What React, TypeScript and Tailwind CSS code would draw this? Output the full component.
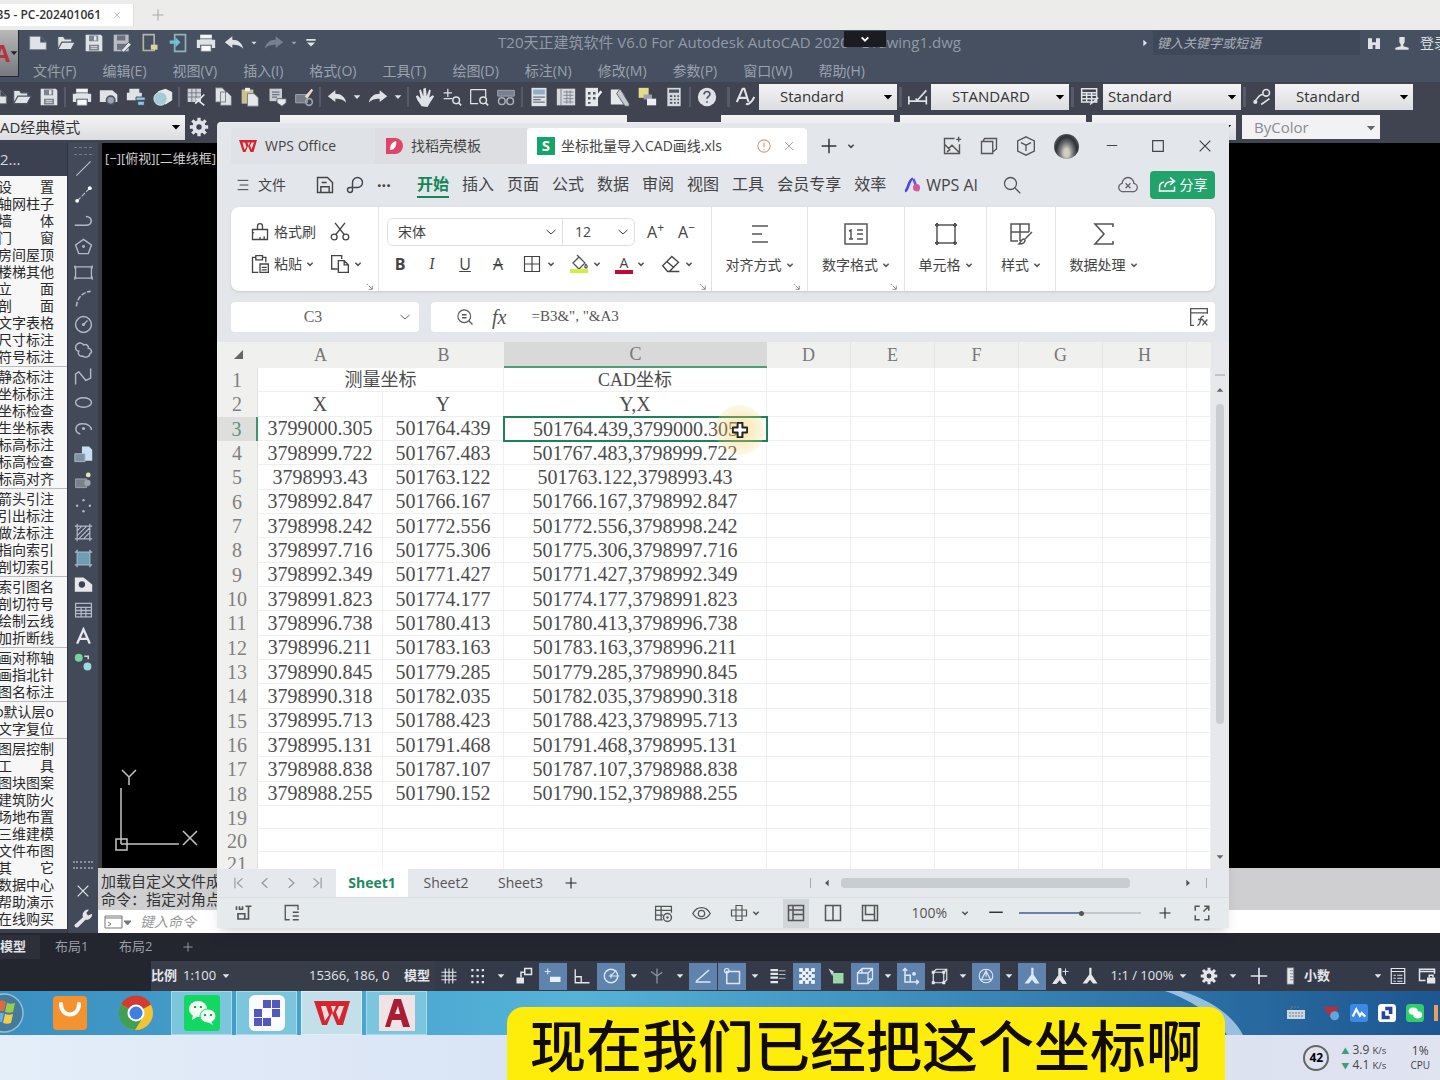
import type { ReactNode } from "react";

const shapes: Record<string, ReactNode> = {
  file: <path d="M2 4h13l7 7v9H2z M15 4v7h7" fill="currentColor" stroke="#6b7280" strokeWidth="1" />,
  folder: <path d="M2 20V4h7l2 3h8v4h4l-5 9z M2 20l5-9h12" fill="currentColor" stroke="#4b5563" strokeWidth="1.4" />,
  save: (
    <>
      <path d="M2 2h18l2 2v18H2z" fill="currentColor" />
      <path d="M6 3h11v7H6z M6 14h12v7H6z" fill="#7b8290" />
      <path d="M12 4h3v5h-3z M8 16h8v1H8z M8 18h8v1H8z" fill="#e5e7eb" />
    </>
  ),
  saveAs: (
    <>
      <path d="M2 2h18v20H2z" fill="#b9bcc2" />
      <path d="M6 3h10v6H6z M6 13h12v7H6z" fill="#6b7280" />
      <path d="M11 21l9-10 3 3-9 9z" fill="#e5e7eb" stroke="#4b5563" />
    </>
  ),
  phone: (
    <>
      <path d="M4 2h13v19H4z" fill="none" stroke="#b7b3a5" strokeWidth="2" />
      <path d="M13 14h8v6h-8z" fill="#ddd3a0" />
    </>
  ),
  phoneIn: (
    <>
      <path d="M8 2h13v20H8z" fill="none" stroke="#8fb4bf" strokeWidth="2" />
      <path d="M2 9h7V5l6 6-6 6v-4H2z" fill="#6ec1d3" />
    </>
  ),
  printer: (
    <>
      <path d="M5 2h14v7H5z" fill="#f3f4f6" />
      <path d="M1 8h22v10h-4v-4H5v4H1z" fill="currentColor" />
      <path d="M6 15h12v7H6z" fill="#f8fafc" stroke="#7b8290" />
      <path d="M5 7h14" stroke="#4b5563" />
    </>
  ),
  undo: <path d="M1 11l9-7v4c7 0 12 4 13 11-3-4-7-5-13-5v4z" fill="currentColor" />,
  redo: <path d="M23 11l-9-7v4C7 8 2 12 1 19c3-4 7-5 13-5v4z" fill="currentColor" />,
  more: <path d="M4 5h16v3H4z M5 11h14l-7 7z" fill="currentColor" />,
  preview: (
    <>
      <path d="M1 4h15l6 5v9H1z" fill="currentColor" />
      <circle cx="14" cy="16" r="5" fill="#9ca3af" stroke="#4b5563" strokeWidth="2" />
    </>
  ),
  publish: (
    <>
      <path d="M4 2h12v5H4z M1 7h18v9H1z" fill="currentColor" />
      <path d="M12 12h11v4H12z M14 17h8v5h-8z" fill="#8ec5e2" stroke="#3b4150" />
    </>
  ),
  globe: (
    <>
      <path d="M6 5l9-3 8 4v10l-8 5-4-3z" fill="#e5e7eb" />
      <circle cx="9" cy="14" r="8" fill="#a5ccd4" stroke="#dbe7ea" />
    </>
  ),
  cut: (
    <>
      <path d="M2 2h16v16H2z" fill="#cfd2d8" />
      <path d="M2 7h16 M2 12h16 M7 2v16 M12 2v16" stroke="#6b7280" />
      <path d="M22 9L11 20 M12 14l10 8" stroke="#e5e7eb" strokeWidth="2" />
    </>
  ),
  copy: <path d="M3 1h8l4 4v13H3z M9 6h8l5 5v11H9z" fill="currentColor" stroke="#6b7280" />,
  paste: (
    <>
      <path d="M2 3h14v17H2z" fill="#c9c28e" />
      <path d="M6 1h6v4H6z" fill="#efefef" />
      <path d="M9 8h8l5 5v10H9z" fill="#e5e7eb" stroke="#6b7280" />
    </>
  ),
  match: (
    <>
      <path d="M3 2h15v15H3z" fill="#c7cbd2" />
      <path d="M6 6h9 M6 9h9 M6 12h6" stroke="#6b7280" strokeWidth="1.5" />
      <path d="M12 14h11v5l-5 4-6-4z" fill="#e5e7eb" stroke="#4b5563" />
    </>
  ),
  brushBlock: (
    <>
      <path d="M2 9h14v10H2z" fill="#777e8a" stroke="#aab0ba" />
      <path d="M13 11l8-9 2 2-7 10z" fill="#ead9cc" />
      <circle cx="18" cy="18" r="4" fill="none" stroke="#9ca3af" strokeWidth="2" />
    </>
  ),
  hand: <path d="M8 23L3 16l-2-5 2-1 4 4L5 4l2-1 3 8V2l3-1 1 10 3-8 2 1-2 9 4-3 2 1-5 8-3 5z" fill="currentColor" />,
  zoomRt: (
    <>
      <path d="M7 2v10 M2 7h10 M2 14h10" stroke="currentColor" strokeWidth="1.5" />
      <circle cx="17" cy="16" r="4" fill="none" stroke="currentColor" strokeWidth="1.8" />
      <path d="M20 19l3 3" stroke="currentColor" strokeWidth="2" />
    </>
  ),
  zoomWin: (
    <>
      <path d="M2 3h18v9 M2 3v17h9" fill="none" stroke="currentColor" strokeWidth="1.5" />
      <circle cx="17" cy="16" r="4" fill="none" stroke="currentColor" strokeWidth="1.8" />
      <path d="M20 19l3 3" stroke="currentColor" strokeWidth="2" />
    </>
  ),
  zoomPrev: (
    <>
      <path d="M2 4h20v7H2z" fill="#79818f" stroke="#a7adb8" />
      <circle cx="7" cy="17" r="4" fill="none" stroke="#aab0ba" strokeWidth="1.8" />
      <circle cx="17" cy="17" r="4" fill="none" stroke="#aab0ba" strokeWidth="1.8" />
    </>
  ),
  props: (
    <>
      <path d="M3 1h18v22H3z" fill="#dfe3e8" />
      <path d="M5 3h14v6H5z" fill="#8fb0c4" />
      <path d="M5 12h14 M5 15h9 M5 18h14" stroke="#6b7280" strokeWidth="1.5" />
    </>
  ),
  design: (
    <>
      <path d="M1 2h22v20H1z" fill="#d5d8dd" />
      <path d="M6 2v20 M9 6h12 M9 10h12 M9 14h12 M9 18h12 M13 4v16 M17 4v16" stroke="#777e8a" />
    </>
  ),
  tool: (
    <>
      <path d="M3 1h15v22H3z" fill="#e5e7eb" />
      <path d="M6 6h3v3H6z M12 6h3v3h-3z M6 12h3v3H6z M12 12h3v3h-3z M6 18h3v2H6z" fill="#4b5563" />
      <path d="M16 13l6-8" stroke="#f1f1f1" strokeWidth="3" />
    </>
  ),
  sheetset: (
    <>
      <path d="M1 3h11l5 6v12H1z" fill="#e5e7eb" />
      <path d="M12 2l11 18v3h-5L8 8z" fill="#c7cbd2" stroke="#4b5563" />
    </>
  ),
  markup: (
    <>
      <path d="M2 1h12v12H2z" fill="#e3dc8c" />
      <path d="M8 9h10v6H8z" fill="#9aa2ae" />
      <path d="M12 14h11v8H12z" fill="#eceef1" />
    </>
  ),
  calc: (
    <>
      <path d="M4 1h16v22H4z" fill="#d5d8dd" />
      <path d="M6 3h12v4H6z M7 10h3v2H7z M12 10h2v2h-2z M16 10h2v2h-2z M7 14h3v2H7z M12 14h2v2h-2z M16 14h2v2h-2z M7 18h3v2H7z M12 18h2v2h-2z M16 18h2v2h-2z" fill="#4b5563" />
    </>
  ),
  help: (
    <>
      <circle cx="12" cy="12" r="11" fill="#dfe2e7" />
      <path d="M8.500 9c0-5 7.500-4.500 7 0-.2 2-3.500 2.500-3.500 5 M12 17v2" fill="none" stroke="#4b5563" strokeWidth="2" />
    </>
  ),
  textStyle: <path d="M1 18L8 2h2l5 16 M4 13h9 M12 20c3 2 7-2 10-8" fill="none" stroke="currentColor" strokeWidth="2.5" />,
  dimStyle: <path d="M1 11v10 M22 11v10 M1 17h21 M9 14l4 3 M12 15L22 4" fill="none" stroke="currentColor" strokeWidth="2" />,
  tableStyle: <path d="M2 2h18v16H2z M2 7h18 M2 10h18 M2 14h18 M8 7v11 M14 7v11 M12 21l10-8" fill="none" stroke="currentColor" strokeWidth="1.8" />,
  leader: (
    <>
      <circle cx="17" cy="7" r="4" fill="none" stroke="currentColor" strokeWidth="2" />
      <path d="M13 9c-6 0-6 6-10 8 M11 21l10-7" fill="none" stroke="currentColor" strokeWidth="2" />
      <circle cx="4" cy="18" r="2.500" fill="currentColor" />
    </>
  ),
  gear: (
    <>
      <path d="M12 1v22 M1 12h22 M4 4l16 16 M20 4L4 20" stroke="currentColor" strokeWidth="4" />
      <circle cx="12" cy="12" r="5.500" fill="none" stroke="currentColor" strokeWidth="5" />
      <circle cx="12" cy="12" r="3.200" fill="#3b4150" />
    </>
  ),
  binoculars: <path d="M3 5h6v6h6V5h6v16h-7v-6h-4v6H3z" fill="currentColor" />,
  user: <path d="M8 3h8v8l-2 3v3l8 2v3H2v-3l8-2v-3l-2-3z" fill="currentColor" />,
  line: <path d="M3 21L21 3" stroke="currentColor" strokeWidth="1.500" />,
  cline: (
    <>
      <path d="M4 20L20 4" stroke="currentColor" strokeWidth="1.500" strokeDasharray="6 2" />
      <circle cx="4" cy="20" r="2.400" fill="#fff" />
      <circle cx="20" cy="4" r="2.400" fill="#fff" />
    </>
  ),
  pline: <path d="M1 18h14c9 0 9-11 0-11" fill="none" stroke="currentColor" strokeWidth="2" />,
  polygon: (
    <>
      <path d="M12 3l10 7-4 11H6L2 10z" fill="none" stroke="currentColor" strokeWidth="1.800" />
      <circle cx="12" cy="12" r="1.800" fill="currentColor" />
    </>
  ),
  rect: <path d="M2 5h20v14H2z M1 3v4 M23 3v4 M1 17v4 M23 17v4" fill="none" stroke="currentColor" strokeWidth="1.600" />,
  arc: <path d="M3 22C4 11 11 4 21 3" fill="none" stroke="currentColor" strokeWidth="2" strokeDasharray="6 2" />,
  circle: (
    <>
      <circle cx="12" cy="12" r="10" fill="none" stroke="currentColor" strokeWidth="1.800" />
      <circle cx="12" cy="12" r="2" fill="currentColor" />
      <path d="M12 12l5-5" stroke="currentColor" strokeWidth="1.500" />
    </>
  ),
  cloud: <path d="M4 4c3-3 7-1 8 1 4-2 7 2 6 4 5 1 5 6 2 7 0 4-6 6-9 3-4 1-7-3-5-6C1 12 1 6 4 4z" fill="none" stroke="currentColor" strokeWidth="1.800" />,
  spline: <path d="M2 22V9l4-3 9 11 6-3V2" fill="none" stroke="currentColor" strokeWidth="1.800" strokeLinejoin="round" />,
  ellipse: <ellipse cx="12" cy="12" rx="10" ry="6" fill="none" stroke="currentColor" strokeWidth="1.800" />,
  ellArc: (
    <>
      <path d="M8 19C-1 17 1 5 12 6c6 0 10 4 10 8" fill="none" stroke="currentColor" strokeWidth="1.800" />
      <circle cx="12" cy="12" r="2" fill="currentColor" />
    </>
  ),
  block: (
    <>
      <path d="M10 2h9l4 4v14H10z" fill="#c7dff0" />
      <path d="M1 11h13v10H1z" fill="#7f92a5" stroke="#b7c5d3" />
    </>
  ),
  makeBlock: (
    <>
      <path d="M2 10h14v11H2z" fill="#7a818d" stroke="#a9b0bb" />
      <circle cx="17" cy="15" r="4" fill="#9ca3af" />
      <circle cx="18" cy="5" r="3" fill="#e6e6b8" />
    </>
  ),
  points: (
    <>
      <circle cx="12" cy="4" r="1.500" fill="currentColor" />
      <circle cx="4" cy="11" r="1.500" fill="currentColor" />
      <circle cx="20" cy="11" r="1.500" fill="currentColor" />
      <circle cx="12" cy="18" r="1.500" fill="currentColor" />
    </>
  ),
  hatch: <path d="M4 4h16v16H4z M4 10l6-6 M4 16L16 4 M6 20L20 6 M12 20l8-8 M1 4h3V1 M23 4h-3V1 M1 20h3v3 M23 20h-3v3" fill="none" stroke="currentColor" strokeWidth="1.500" />,
  gradient: <path d="M4 4h16v16H4z M1 4h3V1 M23 4h-3V1 M1 20h3v3 M23 20h-3v3" fill="#6f9db3" stroke="#9db9c6" strokeWidth="1.500" />,
  region: (
    <>
      <path d="M1 3h11l11 9v9H1z" fill="#e5e7eb" />
      <circle cx="10" cy="12" r="4" fill="#3b4150" />
    </>
  ),
  table: <path d="M2 3h20v17H2z M2 8h20 M2 12h20 M2 16h20 M9 8v12 M15 8v12" fill="none" stroke="currentColor" strokeWidth="1.600" />,
  mtext: <path d="M4 21l8-18 8 18 M7 15h10" fill="none" stroke="#e5e7eb" strokeWidth="3" />,
  addSel: (
    <>
      <circle cx="6" cy="6" r="5" fill="#79d19b" />
      <circle cx="17" cy="17" r="5" fill="#9adbe4" />
      <path d="M13 4h5v4" fill="none" stroke="#d1d5db" strokeWidth="2" />
    </>
  ),
  wrench: <path d="M2 20l10-9c-2-5 3-10 7-9l-3 4 2 3 5-2c0 5-4 8-8 7l-9 9c-3 1-5-1-4-3z" fill="currentColor" />,
  gridOn: <path d="M7 2v20 M12 2v20 M17 2v20 M2 7h20 M2 12h20 M2 17h20" stroke="currentColor" strokeWidth="1.500" />,
  snap: <path d="M3 4h18 M3 12h18 M3 20h18" stroke="currentColor" strokeWidth="3" strokeDasharray="3 4" />,
  infer: (
    <>
      <path d="M2 14h10v8H2z" fill="currentColor" />
      <path d="M13 2h9v8h-9z M8 14V7h5" fill="none" stroke="currentColor" strokeWidth="2" />
    </>
  ),
  dynIn: (
    <>
      <path d="M5 2v8 M1 6h8" stroke="#d7e6f5" strokeWidth="1.500" />
      <path d="M8 13h14v7H8z" fill="#e8f1fa" />
    </>
  ),
  ortho: <path d="M3 3v18h19 M3 13h8v8" fill="none" stroke="currentColor" strokeWidth="1.800" />,
  polar: (
    <>
      <circle cx="12" cy="12" r="9" fill="none" stroke="currentColor" strokeWidth="1.800" />
      <path d="M12 12h11 M12 12l7-8 M12 9v6 M9 12h6" stroke="currentColor" strokeWidth="1.500" />
    </>
  ),
  iso: <path d="M12 2v20 M12 12L4 6 M12 12l7-5 M12 12v7" stroke="#8b929e" strokeWidth="1.800" />,
  otrack: <path d="M2 20h20 M3 19L20 4" stroke="currentColor" strokeWidth="2.200" />,
  osnap: (
    <>
      <path d="M5 6h17v16H5z" fill="none" stroke="currentColor" strokeWidth="2" />
      <circle cx="5" cy="5" r="3" fill="none" stroke="currentColor" strokeWidth="1.500" />
    </>
  ),
  lweight: (
    <>
      <path d="M2 4h10 M2 9h10 M2 14h10 M2 20h10" stroke="currentColor" strokeWidth="3" />
      <path d="M13 5h9 M13 10h9 M13 15h9" stroke="currentColor" />
    </>
  ),
  checker: <path d="M2 2h4v4H2z M10 2h4v4h-4z M18 2h4v4h-4z M6 6h4v4H6z M14 6h4v4h-4z M2 10h4v4H2z M10 10h4v4h-4z M18 10h4v4h-4z M6 14h4v4H6z M14 14h4v4h-4z M2 18h4v4H2z M10 18h4v4h-4z M18 18h4v4h-4z" fill="#eef5fc" stroke="#eef5fc" />,
  cycle: (
    <>
      <path d="M8 8h14v14H8z" fill="#9fd8a8" />
      <path d="M2 2l5 10 2-6z" fill="#d1d5db" />
    </>
  ),
  cube: <path d="M2 8h14v14H2z M8 2h14v14h-6 M8 2v6 M2 8l6-6 M16 8l6-6 M16 22l6-6" fill="none" stroke="currentColor" strokeWidth="1.700" />,
  ucs: (
    <>
      <path d="M4 2v18h18 M1 5l3-3 3 3 M19 17l3 3-3 3 M4 11h7v9" fill="none" stroke="currentColor" strokeWidth="2" />
      <circle cx="16" cy="9" r="2.500" fill="currentColor" />
    </>
  ),
  filter: (
    <>
      <path d="M3 7h14v14H3z M3 7l4-4h14v14l-4 4 M17 7l4-4" fill="none" stroke="currentColor" strokeWidth="1.600" />
      <path d="M1 5h4v4H1z M15 5h4v4h-4z M1 19h4v4H1z M15 19h4v4h-4z" fill="currentColor" />
    </>
  ),
  gizmo: (
    <>
      <circle cx="12" cy="12" r="9" fill="none" stroke="currentColor" strokeWidth="1.500" />
      <path d="M12 5l6 12H6z M12 5v8" fill="none" stroke="currentColor" strokeWidth="1.500" />
    </>
  ),
  anno: <path d="M11 1h3v9l8 12h-6l-4-5-4 5H2l9-12z" fill="currentColor" />,
  annoPlus: <path d="M9 2h3v9l7 11h-5l-4-5-4 5H1l8-11z M18 2v9 M14 6h8" fill="currentColor" stroke="currentColor" strokeWidth="1.200" />,
  plus: <path d="M12 1v22 M1 12h22" stroke="currentColor" strokeWidth="2.200" />,
  ruler: <path d="M8 1h9v22H8z M12 5h5 M12 9h5 M12 13h5 M12 17h5" fill="currentColor" stroke="#6b7280" />,
  list: <path d="M3 2h18v20H3z M3 6h18 M6 11h3 M11 11h7 M6 15h3 M11 15h7 M6 19h3 M11 19h7" fill="none" stroke="currentColor" strokeWidth="1.600" />,
  lockUi: (
    <>
      <path d="M22 9V3H2v15h8 M2 6h20 M15 14v-3h5v3" fill="none" stroke="currentColor" strokeWidth="2" />
      <path d="M12 14h11v8H12z" fill="currentColor" />
    </>
  ),
  // spreadsheet window
  menu: <path d="M4 5h16 M7 12h13 M4 19h16" stroke="currentColor" strokeWidth="1.500" />,
  disk: <path d="M3 3h12l6 6v12H3z M7 21v-7h10v7 M8 9h6" fill="none" stroke="currentColor" strokeWidth="1.700" />,
  route: <path d="M10 15h5a6 6 0 1 0-6-6v9a3 3 0 1 1-3-3h3" fill="none" stroke="currentColor" strokeWidth="1.700" />,
  brush: <path d="M3 9h18v12H3z M9 9V5a3 3 0 0 1 6 0v4 M3 13h2 M17 17v4 M12 18v3" fill="none" stroke="currentColor" strokeWidth="1.600" />,
  scissors: (
    <>
      <circle cx="5" cy="18" r="3.500" fill="none" stroke="currentColor" strokeWidth="1.600" />
      <circle cx="19" cy="18" r="3.500" fill="none" stroke="currentColor" strokeWidth="1.600" />
      <path d="M7 15L18 1 M17 15L6 1" stroke="currentColor" strokeWidth="1.600" />
    </>
  ),
  clip: <path d="M10 22H3V4h4 M15 4h4v6 M7 2h8v5H7z M12 12h10v10H12z M14 16h6 M14 19h6" fill="none" stroke="currentColor" strokeWidth="1.600" />,
  copyDoc: <path d="M9 18H2V2h12v4 M10 8h7l5 5v9H10z M17 8v5h5" fill="none" stroke="currentColor" strokeWidth="1.600" />,
  borders: <path d="M2 2h20v20H2z M12 2v20 M2 12h20" fill="none" stroke="currentColor" strokeWidth="1.600" />,
  eraser: <path d="M2 14L13 3l8 7-11 11H8z M7 9l8 7 M10 21h12" fill="none" stroke="currentColor" strokeWidth="1.600" />,
  align: <path d="M4 4h16 M4 12h10 M4 20h16" stroke="currentColor" strokeWidth="1.500" />,
  numFmt: <path d="M1 2h22v20H1z M5 9l2-1v9 M5 17h4 M13 8h6 M13 12h6 M13 17h6" fill="none" stroke="currentColor" strokeWidth="1.500" />,
  cells: (
    <>
      <path d="M3 3h18v18H3z" fill="none" stroke="currentColor" strokeWidth="1.500" />
      <path d="M1 3h4 M3 1v4 M19 3h4 M21 1v4 M1 21h4 M3 19v4 M19 21h4 M21 19v4" stroke="currentColor" strokeWidth="2" />
    </>
  ),
  cellStyle: <path d="M9 19H2V2h18v8 M11 2v17 M2 10h18 M23 10l-8 8 M15 17c-3 0-3 3-5 5 4 0 6-1 6-4" fill="none" stroke="currentColor" strokeWidth="1.500" />,
  sigma: <path d="M21 5V2H3l9 10-9 10h18v-3" fill="none" stroke="currentColor" strokeWidth="1.600" />,
  zoomFx: (
    <>
      <circle cx="11" cy="11" r="8.500" fill="none" stroke="currentColor" strokeWidth="1.500" />
      <path d="M17 17l5 5 M8 9h6 M8 13h6" stroke="currentColor" strokeWidth="1.700" />
    </>
  ),
  search: (
    <>
      <circle cx="10" cy="10" r="8" fill="none" stroke="currentColor" strokeWidth="1.700" />
      <path d="M16 16l7 7" stroke="currentColor" strokeWidth="1.700" />
    </>
  ),
  fxPanel: <path d="M6 22H2V2h20v6 M2 7h20 M10 22c3 0 3-3 4-7 0-3 1-4 4-4 M11 15h6 M16 15l6 7 M22 15l-6 7" fill="none" stroke="currentColor" strokeWidth="1.600" />,
  photo: <path d="M15 3H3v18h18V10 M3 10l5 5 4-4 9 9 M6 19l4-3 M20 1v6 M17 4h6" fill="none" stroke="currentColor" strokeWidth="1.700" />,
  stack: <path d="M2 6h15v16H2z M4 6l2-4h16v14l-5 4" fill="none" stroke="currentColor" strokeWidth="1.800" />,
  box: <path d="M12 1l10 5v12l-10 5-10-5V6z M6 8l6 3 6-3 M12 11v7" fill="none" stroke="currentColor" strokeWidth="1.600" />,
  cloudX: <path d="M7 20a5 5 0 0 1-2-10 7 7 0 0 1 14 0 5 5 0 0 1-2 10z M9 10l6 6 M15 10l-6 6" fill="none" stroke="currentColor" strokeWidth="1.600" />,
  share: <path d="M8 8c-5 1-6 4-6 7v5h20v-6 M9 15c0-6 4-8 12-8 M16 2l6 5-6 5" fill="none" stroke="currentColor" strokeWidth="2" />,
  close: <path d="M4 4l16 16 M20 4L4 20" stroke="currentColor" strokeWidth="1.800" />,
  min: <path d="M3 11h18" stroke="currentColor" strokeWidth="1.800" />,
  max: <path d="M4 4h16v16H4z" fill="none" stroke="currentColor" strokeWidth="1.800" />,
  chevron: <path d="M4 8l8 8 8-8" fill="none" stroke="currentColor" strokeWidth="4.500" />,
  chevThin: <path d="M3 8l9 8 9-8" fill="none" stroke="currentColor" strokeWidth="2" />,
  caret: <path d="M2 7h20L12 18z" fill="currentColor" />,
  first: <path d="M5 3v18 M18 4l-9 8 9 8" fill="none" stroke="currentColor" strokeWidth="2" />,
  prev: <path d="M16 4l-9 8 9 8" fill="none" stroke="currentColor" strokeWidth="2.200" />,
  next: <path d="M8 4l9 8-9 8" fill="none" stroke="currentColor" strokeWidth="2.200" />,
  last: <path d="M19 3v18 M6 4l9 8-9 8" fill="none" stroke="currentColor" strokeWidth="2" />,
  macro: <path d="M2 3v5 M6 3v4h4V3 M14 3h8 M18 3v17h-5 M4 13h9v7H4z" fill="none" stroke="currentColor" strokeWidth="2.200" />,
  outline: <path d="M20 8V2H3v19h6 M13 11h8 M13 16h8 M13 21h8" fill="none" stroke="currentColor" strokeWidth="1.800" />,
  gridGear: (
    <>
      <path d="M11 20H2V3h20v8 M2 8h20 M2 14h10 M9 3v17" fill="none" stroke="currentColor" strokeWidth="1.600" />
      <circle cx="17" cy="17" r="5" fill="none" stroke="currentColor" strokeWidth="1.800" />
      <circle cx="17" cy="17" r="1.500" fill="currentColor" />
    </>
  ),
  eye: (
    <>
      <path d="M1 12c5-10 17-10 22 0-5 9-17 9-22 0z" fill="none" stroke="currentColor" strokeWidth="1.600" />
      <circle cx="12" cy="12" r="4" fill="none" stroke="currentColor" strokeWidth="1.600" />
    </>
  ),
  focus: <path d="M8 2h8v20H8z M2 8h20v8H2z" fill="none" stroke="currentColor" strokeWidth="1.600" />,
  viewNormal: <path d="M2 2h20v20H2z M2 8h20 M8 2v20 M8 14h14" fill="none" stroke="currentColor" strokeWidth="2" />,
  viewPage: <path d="M2 2h20v20H2z M12 2v20" fill="none" stroke="currentColor" strokeWidth="2" />,
  viewBreak: <path d="M2 2h20v20H2z M6 2v12h12V2 M18 14v8" fill="none" stroke="currentColor" strokeWidth="2" />,
  expand: <path d="M3 9V3h6 M15 3h6v6 M21 15v6h-6 M9 21H3v-6 M14 10l6-6" fill="none" stroke="currentColor" strokeWidth="2" />,
  launcher: <path d="M4 6v-2h2 M8 8l10 10 M19 8v11H8" fill="none" stroke="currentColor" strokeWidth="2.500" />,
};

function Ico({ n, className = "size-5" }: { n: string; className?: string }) {
  return (
    <svg viewBox="0 0 24 24" className={`shrink-0 ${className}`} aria-hidden="true">
      {shapes[n]}
    </svg>
  );
}

const menus = ["文件(F)", "编辑(E)", "视图(V)", "插入(I)", "格式(O)", "工具(T)", "绘图(D)", "标注(N)", "修改(M)", "参数(P)", "窗口(W)", "帮助(H)"];

const quickTools = ["file", "folder", "save", "saveAs", "phone", "phoneIn", "printer", "undo"];

const standardTools = [
  "folder", "save", "|", "printer", "preview", "publish", "globe", "|", "cut", "copy", "paste", "match", "brushBlock", "|",
  "undo", "v", "redo", "v", "|", "hand", "zoomRt", "zoomWin", "zoomPrev", "|",
  "props", "design", "tool", "sheetset", "markup", "calc", "|", "help",
];

const styleCombos = [
  { icon: "textStyle", label: "文字样式", value: "Standard", pad: "pl-[21px]" },
  { icon: "dimStyle", label: "标注样式", value: "STANDARD", pad: "pl-[21px]" },
  { icon: "tableStyle", label: "表格样式", value: "Standard", pad: "pl-[5px]" },
  { icon: "leader", label: "多重引线样式", value: "Standard", pad: "pl-[21px]" },
];

const screenMenu = [
  ["设　　置", "轴网柱子", "墙　　体", "门　　窗", "房间屋顶", "楼梯其他", "立　　面", "剖　　面", "文字表格", "尺寸标注", "符号标注"],
  ["静态标注", "坐标标注", "坐标检查", "生坐标表", "标高标注", "标高检查", "标高对齐"],
  ["箭头引注", "引出标注", "做法标注", "指向索引", "剖切索引"],
  ["索引图名", "剖切符号", "绘制云线", "加折断线"],
  ["画对称轴", "画指北针", "图名标注"],
  ["o默认层o", "文字复位"],
  ["图层控制", "工　　具", "图块图案", "建筑防火", "场地布置", "三维建模", "文件布图", "其　　它", "数据中心", "帮助演示", "在线购买"],
];

const drawTools = [
  "line", "cline", "pline", "polygon", "rect", "arc", "circle", "cloud", "spline", "ellipse", "ellArc", "block", "makeBlock",
  "points", "hatch", "gradient", "region", "table", "mtext", "addSel",
];

const statusTools = [
  "gridOn", "snap", "v", "infer", "dynIn*", "ortho", "polar*", "v", "iso", "v", "otrack*", "osnap*", "v", "lweight",
  "checker*", "cycle", "cube*", "v", "ucs*", "filter", "v", "gizmo*", "v", "anno*", "annoPlus", "anno",
];

const points = [
  ["3799000.305", "501764.439"],
  ["3798999.722", "501767.483"],
  ["3798993.43", "501763.122"],
  ["3798992.847", "501766.167"],
  ["3798998.242", "501772.556"],
  ["3798997.716", "501775.306"],
  ["3798992.349", "501771.427"],
  ["3798991.823", "501774.177"],
  ["3798996.738", "501780.413"],
  ["3798996.211", "501783.163"],
  ["3798990.845", "501779.285"],
  ["3798990.318", "501782.035"],
  ["3798995.713", "501788.423"],
  ["3798995.131", "501791.468"],
  ["3798988.838", "501787.107"],
  ["3798988.255", "501790.152"],
];

const restCols = ["D", "E", "F", "G", "H"];

function CadSelect({ label, value, className }: { label: string; value: string; className: string }) {
  return (
    <span className="relative flex shrink-0">
      <select aria-label={label} className={`appearance-none rounded-none bg-linear-to-b from-[#f4f4f5] to-[#dcdde0] text-[15px] text-[#333] ${className}`}>
        <option>{value}</option>
      </select>
      <Ico n="caret" className="pointer-events-none absolute top-1/2 right-1 size-2.5 -translate-y-1/2 text-black" />
    </span>
  );
}

function CadHeader() {
  return (
    <header className="overflow-hidden bg-[#3f4450] text-[#dfe2e6]">
      <div className="flex h-[52px] bg-[#465061]">
        <button aria-label="应用程序菜单" className="flex h-[47px] w-[19px] shrink-0 items-center justify-end overflow-hidden border-r border-b border-[#24272d] bg-linear-to-b from-[#b9b9b9] to-[#75787d]">
          <span className="text-2xl font-bold text-[#b5333b]">A</span>
          <Ico n="caret" className="size-2 text-[#222]" />
        </button>
        <div className="min-w-0 flex-1 pl-[5px]">
          <div className="flex h-[25px] items-center">
            {quickTools.map((t) => (
              <button key={t} aria-label={t} className="flex w-7 shrink-0 justify-center">
                <Ico n={t} />
              </button>
            ))}
            <Ico n="caret" className="mx-[3px] size-1.5" />
            <button aria-label="重做" className="flex w-7 justify-center text-[#79808d]">
              <Ico n="redo" />
            </button>
            <Ico n="caret" className="mx-[3px] size-1.5 text-[#9aa0ab]" />
            <button aria-label="自定义" className="flex w-[22px] justify-center">
              <Ico n="more" className="size-3.5" />
            </button>
            <div className="relative flex-1 text-center text-[15px] whitespace-nowrap text-[#929aa7]">
              T20天正建筑软件 V6.0 For Autodesk AutoCAD 2020 - Drawing1.dwg
              <span className="absolute top-0 left-[64%] flex h-4 w-[42px] items-center justify-center bg-[#1b1c20] text-white">
                <Ico n="chevron" className="size-2.5" />
              </span>
            </div>
            <span className="flex w-4 justify-center">
              <Ico n="caret" className="size-2 -rotate-90" />
            </span>
            <input aria-label="搜索" placeholder="键入关键字或短语" className="h-6 w-[207px] shrink-0 bg-[#3f4859] pl-1 text-[13px] italic placeholder:text-[#a9afba]" />
            <Ico n="binoculars" className="mx-1.5 size-4" />
            <Ico n="user" className="mx-1.5 size-4" />
            <a href="#login" className="w-6 shrink-0 pl-1 text-sm whitespace-nowrap">登录</a>
          </div>
          <nav className="flex h-[27px] items-center gap-[26px] pt-1 pl-[9px] text-sm text-[#9ba2ae]">
            {menus.map((m) => (
              <a key={m} href="#menu" className="whitespace-nowrap">{m}</a>
            ))}
          </nav>
        </div>
      </div>

      <div className="flex h-[29px] items-center">
        <span className="flex w-[8px] shrink-0 justify-end overflow-hidden">
          <Ico n="file" />
        </span>
        {standardTools.map((t, i) =>
          t === "|" ? (
            <span key={i} className="mx-[2px] h-5 w-[2px] shrink-0 bg-[#555b69]" />
          ) : t === "v" ? (
            <span key={i} className="flex w-3.5 shrink-0 justify-center">
              <Ico n="caret" className="size-2" />
            </span>
          ) : (
            <button key={i} aria-label={t} className="flex w-[27px] shrink-0 justify-center">
              <Ico n={t} />
            </button>
          ),
        )}
        <span className="w-[5px] shrink-0" />
        {styleCombos.map((c) => (
          <div key={c.label} className="flex shrink-0 items-center">
            <span className="mx-[2px] h-5 w-[3px] bg-[#555b69]" />
            <span className="flex w-[27px] justify-center">
              <Ico n={c.icon} />
            </span>
            <CadSelect label={c.label} value={c.value} className={`h-[26px] w-[138px] ${c.pad}`} />
          </div>
        ))}
      </div>

      <div className="flex h-8 items-center gap-1.5">
        <CadSelect label="工作空间" value="AD经典模式" className="h-[25px] w-[185px]" />
        <Ico n="gear" className="mx-[-2px] size-5" />
        <span className="w-[61px] shrink-0" />
        <CadSelect label="图层" value="0" className="h-[25px] w-[347px]" />
        <span className="w-[82px] shrink-0" />
        <CadSelect label="颜色" value="ByLayer" className="h-[25px] w-[173px]" />
        <CadSelect label="线型" value="ByLayer" className="h-[25px] w-[186px]" />
        <CadSelect label="线宽" value="ByLayer" className="h-[25px] w-[144px]" />
        <span className="relative flex shrink-0">
          <select aria-label="打印样式" className="h-6 w-[138px] appearance-none bg-[#f2f2f5] pl-3 text-[15px] text-[#8b8b90]">
            <option>ByColor</option>
          </select>
          <Ico n="caret" className="pointer-events-none absolute top-2 right-1 size-2.5 text-[#666]" />
        </span>
      </div>
    </header>
  );
}

function CadMain() {
  return (
    <main className="flex flex-1 bg-[#3b4150]">
      <aside className="w-[68px] shrink-0 border-r border-[#2f333c]">
        <h2 className="flex h-[33px] items-center text-[15px] text-[#d6d9de]">2...</h2>
        <div className="bg-[#f7f7f8] py-[2px] text-sm text-[#2a2a2a]">
          {screenMenu.map((group, i) => (
            <ul key={i} className={i === 0 ? "" : "mt-px border-t border-[#b9bbc0] pt-px"}>
              {group.map((item) => (
                <li key={item} className="flex h-[17px] w-[54px] items-center justify-end overflow-hidden whitespace-nowrap">
                  {item}
                </li>
              ))}
            </ul>
          ))}
        </div>
      </aside>

      <aside className="flex w-[30px] shrink-0 flex-col items-center bg-[#424959] text-[#b4bac5]">
        <span className="mt-1 h-2 w-[18px] border-y border-dashed border-[#767d8b]" />
        {drawTools.map((t) => (
          <button key={t} aria-label={t} className="flex h-[26px] items-center">
            <Ico n={t} className="size-[19px]" />
          </button>
        ))}
        <div className="mt-auto flex flex-col items-center gap-2 pb-1 text-[#e3e5e9]">
          <span className="mb-1.5 h-2 w-5 border-y-2 border-dotted border-[#8a909c]" />
          <Ico n="close" className="size-4" />
          <Ico n="wrench" className="my-px size-5" />
        </div>
      </aside>

      <section className="flex min-w-0 flex-1 flex-col">
        <div className="flex flex-1 flex-col justify-between border-l-4 border-[#3a3d44] bg-black text-[#d0d0d0]">
          <p className="pt-1.5 pl-[3px] text-[13px]">[−][俯视][二维线框]</p>
          <svg viewBox="0 0 90 90" className="mb-3.5 ml-3 size-[90px]" fill="none" stroke="#c4c4c4" strokeWidth="1.500" aria-label="坐标轴">
            <path d="M7 24v56 M7 80h58 M2 75h11v11H2z M8 6l7 7 7-7 M15 13v8 M69 67l14 14 M83 67L69 81" />
          </svg>
        </div>
        <div className="bg-[#cfcfd2] pt-1 pl-[3px] text-[15px] leading-[18px] text-[#333]">
          <p>加载自定义文件成功。</p>
          <p className="pb-0.5">命令：指定对角点或 [栏选(F)]:</p>
        </div>
        <label className="flex h-[23px] items-center gap-2 bg-white pl-1.5 text-[#777]">
          <svg viewBox="0 0 28 16" className="h-4 w-7" fill="none" stroke="currentColor" aria-hidden="true">
            <path d="M1 2h17v12H1z M1 4h17 M4 8l3 2-3 2" />
            <path d="M20 7h7l-3.500 4z" fill="currentColor" />
          </svg>
          <input aria-label="命令行" placeholder="键入命令" className="w-60 text-sm italic placeholder:text-[#999]" />
        </label>
      </section>
    </main>
  );
}

function CadFooter() {
  return (
    <footer className="bg-[#23262f] text-[#e4e6ea]">
      <nav className="flex h-7 items-center overflow-hidden text-[13px] text-[#9a9ea7]">
        <a href="#model" className="flex h-6 w-10 items-center bg-[#2d3039] font-bold whitespace-nowrap text-[#e1e3e7]">模型</a>
        <a href="#layout1" className="ml-[15px] w-16">布局1</a>
        <a href="#layout2" className="w-16">布局2</a>
        <button aria-label="新建布局">
          <Ico n="plus" className="size-2.5" />
        </button>
      </nav>
      <div className="flex h-[30px] items-center overflow-hidden pl-[151px] text-[13px] whitespace-nowrap">
        <div className="flex h-full flex-1 items-center bg-[#383d4a]">
          <button className="flex items-center gap-1.5">
            <b className="font-bold">比例</b> 1:100 <Ico n="caret" className="size-2" />
          </button>
          <span className="ml-auto w-[95px]">15366, 186, 0</span>
          <b className="w-[31px]">模型</b>
        </div>
        <div className="flex h-full shrink-0 items-center gap-px bg-[#343a48]">
          {statusTools.map((t, i) =>
            t === "v" ? (
              <span key={i} className="flex w-4 justify-center">
                <Ico n="caret" className="size-2" />
              </span>
            ) : (
              <button key={i} aria-label={t.replace("*", "")} className={t.endsWith("*") ? "flex h-[27px] w-7 items-center justify-center bg-[#5f83ad] text-[#dbe8f5]" : "flex h-[27px] w-7 items-center justify-center"}>
                <Ico n={t.replace("*", "")} className="size-[18px]" />
              </button>
            ),
          )}
          <button className="flex w-[88px] items-center justify-center gap-1.5">
            1:1 / 100% <Ico n="caret" className="size-2" />
          </button>
          <Ico n="gear" className="mx-1.5 size-[18px]" />
          <Ico n="caret" className="mx-1 size-2" />
          <Ico n="plus" className="mx-2 size-[18px]" />
          <Ico n="ruler" className="mx-1 size-[18px]" />
          <button className="flex w-[78px] items-center justify-between">
            <b>小数</b> <Ico n="caret" className="size-2" />
          </button>
          <Ico n="list" className="mx-1.5 size-[18px]" />
          <Ico n="lockUi" className="mx-1 size-[18px]" />
        </div>
      </div>
    </footer>
  );
}

function WpsMark({ className }: { className: string }) {
  return (
    <svg viewBox="0 0 36 24" className={className} aria-hidden="true">
      <path d="M0 0h36l-7 24h-6l-5-12-5 12H8z" fill="#d3272f" />
      <path d="M7 5h5l3 9-4 6z M17 5h5l-3 7z M25 5h5l-5 14-3-8z" fill="#f5d9d9" />
    </svg>
  );
}

function Taskbar() {
  return (
    <div className="relative flex h-11 items-center overflow-hidden bg-linear-to-r from-[#3a8fc0] via-[#55b3d8] via-40% to-[#1d5690]">
      <svg viewBox="0 0 120 44" className="pointer-events-none absolute top-0 right-[165px] h-11 w-[120px]" aria-hidden="true">
        <path d="M10 0h16c34 10 54 28 62 44H72C62 28 40 10 10 0z" fill="#b9dcf5" opacity="0.75" />
      </svg>
      <svg viewBox="0 0 24 40" className="h-10 w-6 shrink-0" aria-label="开始">
        <circle cx="4" cy="20" r="19" fill="#467a9b" stroke="#8fc1d8" strokeWidth="1.500" />
        <path d="M0 8c3-1 4 0 6 1l-2 9H0z" fill="#dd6a3a" />
        <path d="M7 10c3 1 5 1 8 0l-2 9c-3 1-5 1-8 0z" fill="#9ccc4d" />
        <path d="M0 20h4l-2 9H0z" fill="#6bb0e4" />
        <path d="M5 21c3 1 5 1 8 0l-2 9c-3 1-5 1-8 0z" fill="#f2cf4a" />
      </svg>
      <div className="flex w-[142px] shrink-0 gap-[30px] pl-7">
        <svg viewBox="0 0 36 36" className="size-9" aria-label="商店">
          <rect x="1" y="1" width="34" height="34" rx="4" fill="#f3922f" />
          <path d="M9 9c0 14 18 14 18 0" fill="none" stroke="#fff" strokeWidth="4" strokeLinecap="round" />
        </svg>
        <svg viewBox="0 0 36 36" className="size-9" aria-label="Chrome">
          <circle cx="18" cy="18" r="17" fill="#f2c431" />
          <path d="M18 18L3 9.500a17 17 0 0 1 30 0z" fill="#d33b30" />
          <path d="M18 18L3 9.500A17 17 0 0 0 17 35l8-13z" fill="#3f9f52" />
          <circle cx="18" cy="18" r="8.500" fill="#fff" />
          <circle cx="18" cy="18" r="6.500" fill="#3f7fe0" />
        </svg>
      </div>
      <div className="ml-[5px] flex h-full flex-1 gap-1">
        <button aria-label="微信" className="flex w-[61px] items-center justify-center border border-[#a8dbe9] bg-[#7cc6dd]">
          <svg viewBox="0 0 36 36" className="size-9">
            <rect width="36" height="36" rx="3" fill="#12d861" />
            <ellipse cx="14" cy="14" rx="9" ry="8" fill="#f2fff5" />
            <ellipse cx="24" cy="21" rx="8" ry="7" fill="#f2fff5" stroke="#12d861" />
            <path d="M9 20l-1 5 5-3z M27 26l2 4-5-3z" fill="#f2fff5" />
            <path d="M11 11v2 M17 11v2 M21 19v2 M27 19v2" stroke="#12a850" strokeWidth="2" />
          </svg>
        </button>
        <button aria-label="远程控制" className="flex w-[61px] items-center justify-center border border-[#a8dbe9] bg-[#7cc6dd]">
          <svg viewBox="0 0 36 36" className="size-9">
            <rect width="36" height="36" rx="6" fill="#fafbff" />
            <path d="M14 5h8v8h-8z M23 5h8v8h-8z M5 14h8v8H5z M23 14h8v8h-8z M5 23h8v8H5z M14 23h8v8h-8z" fill="#5357c0" />
          </svg>
        </button>
        <button aria-label="WPS Office" className="flex w-[61px] items-center justify-center border border-[#d9eef5] bg-[#c3dfea]">
          <WpsMark className="h-6 w-9" />
        </button>
        <button aria-label="AutoCAD" className="flex w-[61px] items-center justify-center border border-[#a8dbe9] bg-[#7cc6dd]">
          <svg viewBox="0 0 36 36" className="size-9">
            <rect width="36" height="36" fill="#efe3e6" />
            <path d="M6 32L15 4h7l9 28h-7l-2-7h-9l-2 7z M16 19h5l-2-8z" fill="#a81e34" fillRule="evenodd" />
          </svg>
        </button>
      </div>
      <div className="flex shrink-0 items-center gap-2.5 pr-0.5">
        <svg viewBox="0 0 20 14" className="h-3.5 w-5" aria-label="输入法">
          <path d="M1 4h18v9H1z" fill="#cfd6de" />
          <path d="M3 7h14 M3 10h14 M5 4V1h8" fill="none" stroke="#6b7d91" strokeDasharray="2 1" />
        </svg>
        <svg viewBox="0 0 20 20" className="ml-1.5 size-[18px]" aria-label="安全">
          <path d="M1 3h18l-8 14z" fill="#b3303d" />
          <circle cx="14" cy="13" r="5" fill="#5fa6de" />
        </svg>
        <svg viewBox="0 0 20 20" className="size-[18px]" aria-label="云盘">
          <rect width="20" height="20" rx="3" fill="#3b8be6" />
          <path d="M3 14l4-8 4 7 2-3 4 4" fill="none" stroke="#fff" strokeWidth="2.500" />
        </svg>
        <svg viewBox="0 0 20 20" className="size-[18px]" aria-label="远程">
          <rect width="20" height="20" rx="4" fill="#fff" />
          <path d="M8 3h8v8h-4V7H8z M4 8h4v5h5v4H4z" fill="#27439c" />
        </svg>
        <svg viewBox="0 0 20 20" className="size-[18px]" aria-label="微信消息">
          <rect width="20" height="20" rx="4" fill="#2fcf6b" />
          <ellipse cx="8" cy="8" rx="5" ry="4" fill="#fff" />
          <ellipse cx="13" cy="12" rx="5" ry="4" fill="#fff" />
        </svg>
        <span className="h-4 w-1 bg-[#e9a15a]" />
      </div>
    </div>
  );
}

function SmallCaret() {
  return <Ico n="chevron" className="size-2 text-[#555]" />;
}

function RibbonGroup({ icon, label, width, launcher }: { icon: string; label: string; width: string; launcher?: boolean }) {
  return (
    <div className={`relative flex shrink-0 flex-col items-center gap-[9px] border-l border-[#e3e4e7] pt-[15px] ${width}`}>
      <Ico n={icon} className="size-6 text-[#555]" />
      <button className="flex items-center gap-1 text-sm whitespace-nowrap">
        {label} <SmallCaret />
      </button>
      {launcher && <Ico n="launcher" className="absolute right-1.5 bottom-0 size-2 text-[#777]" />}
    </div>
  );
}

function WpsTop() {
  return (
    <>
      <div className="flex h-9 items-center pt-0.5 text-[15px] text-[#444]">
        <a href="#home" className="flex h-9 w-[144px] shrink-0 items-center gap-2 rounded-t bg-[#dfe2e7] pl-2 text-sm">
          <WpsMark className="h-3.5 w-[18px]" /> WPS Office
        </a>
        <a href="#docer" className="flex h-9 w-[152px] shrink-0 items-center gap-2 bg-[#dcdee2] pl-2.5 text-sm">
          <svg viewBox="0 0 18 18" className="size-[18px]" aria-hidden="true">
            <path d="M1 1h9a8 8 0 0 1 0 16H1z" fill="#e0446b" />
            <path d="M5 13c0-5 2-8 6-9 1 4-1 9-6 9z" fill="#fff" />
          </svg>
          找稻壳模板
        </a>
        <div className="flex h-9 w-[280px] shrink-0 items-center rounded-t-sm bg-white pr-3 pl-2.5 text-sm">
          <span className="mr-1.5 flex size-[18px] items-center justify-center bg-[#14a468] text-[15px] font-bold text-white">S</span>
          <span className="flex-1">坐标批量导入CAD画线.xls</span>
          <svg viewBox="0 0 16 16" className="mr-3 size-3.5" fill="none" stroke="#d2a182" strokeWidth="1.300" aria-hidden="true">
            <circle cx="8" cy="8" r="7" />
            <path d="M8 4v5 M8 11v1.500" />
          </svg>
          <button aria-label="关闭标签" className="text-[#999]">
            <Ico n="close" className="size-3" />
          </button>
        </div>
        <Ico n="plus" className="ml-3.5 size-4 text-[#333]" />
        <Ico n="chevron" className="ml-2.5 size-2" />
        <div className="ml-auto flex items-center gap-[18px] text-[#555]">
          <Ico n="photo" />
          <Ico n="stack" className="size-[18px]" />
          <Ico n="box" />
          <span className="size-[25px] rounded-full bg-[radial-gradient(ellipse_at_50%_75%,#cfcdbf_15%,#7b7d80_35%,#2e3136_60%,#8b979c_100%)]" />
        </div>
        <div className="flex w-[136px] shrink-0 items-center justify-end gap-[31px] pr-0.5 text-[#444]">
          <Ico n="min" className="size-3.5" />
          <Ico n="max" className="size-4" />
          <Ico n="close" className="size-4" />
        </div>
      </div>

      <nav className="flex h-[44px] items-center text-base text-[#444]">
        <Ico n="menu" className="ml-1 size-4" />
        <a href="#file" className="ml-[7px] text-sm">文件</a>
        <Ico n="disk" className="ml-[29px] size-5" />
        <Ico n="route" className="ml-2.5 size-5" />
        <span className="ml-3 w-[30px] text-base font-bold">···</span>
        <div className="ml-2.5 flex gap-[13px] whitespace-nowrap">
          <a href="#start" className="border-b-2 border-[#15855a] font-bold text-[#15855a]">开始</a>
          {["插入", "页面", "公式", "数据", "审阅", "视图", "工具", "会员专享", "效率"].map((t) => (
            <a key={t} href="#tab">{t}</a>
          ))}
        </div>
        <a href="#ai" className="ml-[18px] flex items-center gap-1 text-base whitespace-nowrap">
          <svg viewBox="0 0 20 18" className="h-4 w-[18px]" aria-hidden="true">
            <path d="M1 16C5 15 5 2 10 2" fill="none" stroke="#4b46e8" strokeWidth="3" />
            <path d="M9 2h3l5 14h-3z" fill="#5b55ee" />
            <circle cx="14" cy="12" r="4" fill="#d9569a" />
          </svg>
          WPS AI
        </a>
        <Ico n="search" className="ml-[25px] size-[18px] text-[#555]" />
        <Ico n="cloudX" className="mr-3 ml-auto size-5 text-[#666]" />
        <button className="flex h-7 w-[65px] items-center justify-center gap-1 rounded bg-[#23a36c] text-sm text-white">
          <Ico n="share" className="size-[18px]" /> 分享
        </button>
      </nav>

      <div className="flex h-[84px] overflow-hidden rounded-lg bg-white text-sm text-[#444] shadow-sm">
        <div className="relative grid w-[147px] shrink-0 grid-cols-[70px_1fr] content-start items-center gap-x-2.5 gap-y-3 pt-[15px] pl-[19px] whitespace-nowrap">
          <button className="flex items-center gap-1">
            <Ico n="brush" /> 格式刷
          </button>
          <Ico n="scissors" />
          <button className="flex items-center gap-1">
            <Ico n="clip" /> 粘贴 <SmallCaret />
          </button>
          <button aria-label="复制" className="flex items-center gap-1">
            <Ico n="copyDoc" /> <SmallCaret />
          </button>
          <Ico n="launcher" className="absolute right-1 bottom-0 size-2 text-[#777]" />
        </div>
        <div className="relative w-[333px] shrink-0 border-l border-[#e3e4e7] pt-[11px] pl-2">
          <div className="flex items-center">
            <span className="relative flex">
              <select aria-label="字体" className="h-[28px] w-[176px] appearance-none rounded-l-md border border-[#dcdee2] pl-2.5">
                <option>宋体</option>
              </select>
              <Ico n="chevThin" className="pointer-events-none absolute top-2 right-1.5 size-3" />
            </span>
            <span className="relative -ml-px flex">
              <select aria-label="字号" className="h-[28px] w-[73px] appearance-none rounded-r-md border border-[#dcdee2] pl-3">
                <option>12</option>
              </select>
              <Ico n="chevThin" className="pointer-events-none absolute top-2 right-1.5 size-3" />
            </span>
            <button className="ml-3 text-base leading-5">A<sup>+</sup></button>
            <button className="ml-3.5 text-base leading-5">A<sup>−</sup></button>
          </div>
          <div className="mt-2 flex items-center text-base leading-5 text-[#444]">
            <button className="w-[26px] font-bold">B</button>
            <button className="w-[38px] font-serif italic">I</button>
            <button className="w-[28px] underline">U</button>
            <button className="w-[38px] line-through">A</button>
            <button aria-label="边框" className="flex w-[48px] items-center gap-1.5 pl-1.5">
              <Ico n="borders" className="size-[18px]" /> <SmallCaret />
            </button>
            <button aria-label="填充颜色" className="flex w-[46px] items-center gap-1 pl-1">
              <svg viewBox="0 0 20 20" className="size-5">
                <path d="M4 9l6-6 6 6-6 6z M8 1l3 3 M17 10c2 3 1 4 0 4s-2-1 0-4" fill="none" stroke="#555" strokeWidth="1.300" />
                <path d="M1 15h18v4H1z" fill="#d5ee3f" />
              </svg>
              <SmallCaret />
            </button>
            <button aria-label="字体颜色" className="flex w-[46px] items-center gap-1 pl-1">
              <span className="w-[18px] border-b-4 border-[#c00a35] text-center text-sm leading-[15px]">A</span> <SmallCaret />
            </button>
            <button aria-label="清除" className="flex items-center gap-1 pl-1">
              <Ico n="eraser" /> <SmallCaret />
            </button>
          </div>
          <Ico n="launcher" className="absolute right-1 bottom-0 size-2 text-[#777]" />
        </div>
        <RibbonGroup icon="align" label="对齐方式" width="w-[96px]" launcher />
        <RibbonGroup icon="numFmt" label="数字格式" width="w-[97px]" launcher />
        <RibbonGroup icon="cells" label="单元格" width="w-[82px]" />
        <RibbonGroup icon="cellStyle" label="样式" width="w-[69px]" />
        <RibbonGroup icon="sigma" label="数据处理" width="w-[96px]" />
      </div>

      <div className="flex h-[51px] items-center gap-3">
        <label className="flex h-[30px] w-[188px] items-center rounded bg-white pr-2 text-[#666]">
          <input aria-label="名称框" defaultValue="C3" className="w-0 flex-1 pr-1 text-center font-['Liberation_Serif',serif] text-base" />
          <Ico n="chevThin" className="size-3" />
        </label>
        <label className="flex h-[30px] flex-1 items-center rounded bg-white pr-1.5 pl-[25px] text-[#555]">
          <Ico n="zoomFx" className="size-[18px]" />
          <i className="ml-[18px] font-['Liberation_Serif',serif] text-xl">fx</i>
          <input aria-label="编辑栏" defaultValue={'=B3&", "&A3'} className="ml-[25px] w-0 flex-1 font-['Liberation_Serif',serif] text-[15px]" />
          <Ico n="fxPanel" />
        </label>
      </div>
    </>
  );
}

function Sheet() {
  const cell = "border-r border-b border-[#eef0ee] p-0";
  return (
    <div className="flex h-[527px] overflow-hidden bg-[#f0f0f0]">
      <table className="h-[534px] min-w-0 flex-1 table-fixed border-separate border-spacing-0 bg-white text-center font-['Liberation_Serif','Noto_Sans_CJK_SC',serif] text-xl leading-[22px] text-[#4c4c4c]">
        <colgroup>
          <col className="w-[41px]" />
          <col className="w-[125px]" />
          <col className="w-[121px]" />
          <col className="w-[263px]" />
          {restCols.map((c) => (
            <col key={c} className="w-[84px]" />
          ))}
          <col />
        </colgroup>
        <thead className="bg-[#f0f0ef] text-lg leading-6 text-[#777]">
          <tr>
            <th className="h-[26px] p-0">
              <svg viewBox="0 0 10 10" className="ml-4 size-2.5" aria-label="全选">
                <path d="M10 0v9H1z" fill="#666" />
              </svg>
            </th>
            <th className="p-0 font-normal">A</th>
            <th className="p-0 font-normal">B</th>
            <th className="border-b-2 border-[#4f9c7d] bg-[#d8d9d8] p-0 font-normal">C</th>
            {restCols.map((c) => (
              <th key={c} className="border-r border-[#e4e5e4] p-0 font-normal">{c}</th>
            ))}
            <th />
          </tr>
        </thead>
        <tbody>
          {Array.from({ length: 21 }, (_, i) => {
            const row = i + 1;
            const p = points[i - 2];
            return (
              <tr key={row}>
                <th className={row === 3 ? "border-r-2 border-[#3d9470] bg-[#dededd] p-0 text-[#5f8f7c] font-normal" : "border-r border-[#dfe1df] bg-[#f0f0ef] p-0 font-normal text-[#808080]"}>{row}</th>
                {row === 1 ? (
                  <td colSpan={2} className={`${cell} text-lg leading-[22px]`}>测量坐标</td>
                ) : (
                  <>
                    <td className={cell}>{row === 2 ? "X" : p?.[0]}</td>
                    <td className={cell}>{row === 2 ? "Y" : p?.[1]}</td>
                  </>
                )}
                {row === 1 && <td className={`${cell} text-lg leading-[22px]`}>CAD坐标</td>}
                {row === 2 && <td className={cell}>Y,X</td>}
                {row === 3 && (
                  <td className="relative p-0 outline-2 -outline-offset-1 outline-[#1d8259]">
                    {`${p[1]},${p[0]}`}
                    <span className="absolute -top-3 right-0.5 flex size-[50px] items-center justify-center rounded-full bg-radial from-[#f2c84b]/50 to-[#f2d884]/20 to-70%">
                      <svg viewBox="0 0 20 20" className="size-4" aria-hidden="true">
                        <path d="M7 1h6v6h6v6h-6v6H7v-6H1V7h6z" fill="#fff" stroke="#222" strokeWidth="2.500" strokeLinejoin="round" />
                      </svg>
                    </span>
                  </td>
                )}
                {row > 3 && <td className={cell}>{p && `${p[1]},${p[0]}`}</td>}
                {restCols.map((c) => (
                  <td key={c} className={cell} />
                ))}
                <td className={cell} />
              </tr>
            );
          })}
        </tbody>
      </table>
      <div className="flex w-[18px] shrink-0 flex-col items-center bg-[#e6e8eb] pt-8 pb-2 text-[#666]">
        <span className="mb-2.5 h-[2px] w-2.5 bg-[#c2c5ca]" />
        <Ico n="caret" className="size-2 rotate-180" />
        <span className="mt-2.5 h-[320px] w-2 rounded bg-[#cacdd1]" />
        <Ico n="caret" className="mt-auto size-2" />
      </div>
    </div>
  );
}

function WpsBottom() {
  return (
    <>
      <div className="flex h-7 items-center bg-[#e5e8ec] pr-4 pl-[15px] text-sm text-[#555]">
        <div className="flex w-[104px] gap-3 text-[#999]">
          {["first", "prev", "next", "last"].map((n) => (
            <button key={n} aria-label={n}>
              <Ico n={n} className="size-3.5" />
            </button>
          ))}
        </div>
        <a href="#sheet1" className="flex h-full w-[72px] items-center justify-center bg-white font-bold text-[#1c8a5e]">Sheet1</a>
        <a href="#sheet2" className="w-[76px] text-center">Sheet2</a>
        <a href="#sheet3" className="w-[73px] text-center">Sheet3</a>
        <Ico n="plus" className="ml-2 size-3 text-[#222]" />
        <span className="ml-auto h-2.5 w-px bg-[#aaa]" />
        <Ico n="caret" className="ml-3 size-2 rotate-90" />
        <span className="ml-2.5 h-2.5 w-[289px] rounded bg-[#c8cdd0]" />
        <Ico n="caret" className="ml-[54px] size-2 -rotate-90" />
        <span className="mr-1.5 ml-3.5 h-2.5 w-px bg-[#aaa]" />
      </div>
      <div className="flex h-[31px] items-center border-t border-[#dadee2] bg-[#e5eaed] pr-[18px] pl-[18px] text-[#555]">
        <Ico n="macro" className="size-[18px]" />
        <Ico n="outline" className="ml-[30px] size-[18px]" />
        <div className="ml-auto flex items-center gap-[19px]">
          <Ico n="gridGear" className="size-[19px]" />
          <Ico n="eye" className="size-[19px]" />
          <span className="flex w-[31px] items-center gap-1">
            <Ico n="focus" className="size-[18px]" /> <SmallCaret />
          </span>
        </div>
        <span className="ml-[22px] flex h-[29px] w-[26px] items-center justify-center bg-[#d2d6da]">
          <Ico n="viewNormal" className="size-[18px]" />
        </span>
        <Ico n="viewPage" className="ml-[15px] size-[18px]" />
        <Ico n="viewBreak" className="ml-[19px] size-[18px]" />
        <button className="ml-8 flex items-center gap-3.5 text-sm">
          100% <SmallCaret />
        </button>
        <Ico n="min" className="ml-[18px] size-[18px] text-[#222]" />
        <input
          type="range"
          aria-label="缩放"
          defaultValue="51"
          className="ml-3.5 h-[2px] w-[122px] appearance-none bg-linear-to-r from-[#6f7fa8] from-50% to-[#c3c8ce] to-50% [&::-webkit-slider-thumb]:size-[5px] [&::-webkit-slider-thumb]:appearance-none [&::-webkit-slider-thumb]:rounded-full [&::-webkit-slider-thumb]:bg-[#555]"
        />
        <Ico n="plus" className="ml-[18px] size-3 text-[#222]" />
        <Ico n="expand" className="ml-[22px] size-[18px]" />
      </div>
    </>
  );
}

function WpsWindow() {
  return (
    <div className="absolute top-[122px] right-[211px] left-[217px] overflow-hidden rounded-t border-t border-[#eceef1] bg-[#e3e6eb] pt-1 shadow-lg">
      <div className="px-[14px]">
        <WpsTop />
      </div>
      <Sheet />
      <WpsBottom />
    </div>
  );
}

export default function App() {
  return (
    <div className="relative flex min-h-screen flex-col overflow-hidden bg-[#e0e8f5] font-['Open_Sans','Noto_Sans_CJK_SC',sans-serif]">
      <div className="flex h-[30px] items-center bg-[#ececeb] text-[13px] text-[#333]">
        <div className="flex h-[22px] w-[134px] items-center justify-end gap-3 overflow-hidden border-r border-[#ddd] bg-white pr-3 whitespace-nowrap">
          <span className="flex w-[104px] justify-end text-xs font-semibold">35 - PC-202401061</span>
          <Ico n="close" className="size-2 text-[#999]" />
        </div>
        <Ico n="plus" className="ml-[18px] size-3 text-[#aaa]" />
      </div>
      <CadHeader />
      <CadMain />
      <CadFooter />
      <Taskbar />
      <div className="flex h-[45px] items-center justify-end gap-3 bg-linear-to-r from-[#e4eef9] via-[#d5e0f4] to-[#e0e3f0] pr-2.5 text-xs text-[#444]">
        <span className="flex size-[26px] items-center justify-center rounded-full border-2 border-[#666] font-bold text-black">42</span>
        <div className="leading-[14px]">
          <p><span className="text-[8px] text-[#3c9c7c]">▲</span> 3.9 <small>K/s</small></p>
          <p><span className="text-[8px] text-[#3c9c7c]">▼</span> 4.1 <small>K/s</small></p>
        </div>
        <div className="pl-3 text-center leading-[14px]">
          <p>1%</p>
          <p className="text-[10px]">CPU</p>
        </div>
      </div>
      <WpsWindow />
      <p className="absolute bottom-0 left-[507px] rounded-t-2xl bg-[#feec0a] px-[23px] pt-1 text-[56px] leading-[69px] font-medium whitespace-nowrap text-[#120b02]">
        现在我们已经把这个坐标啊
      </p>
    </div>
  );
}
